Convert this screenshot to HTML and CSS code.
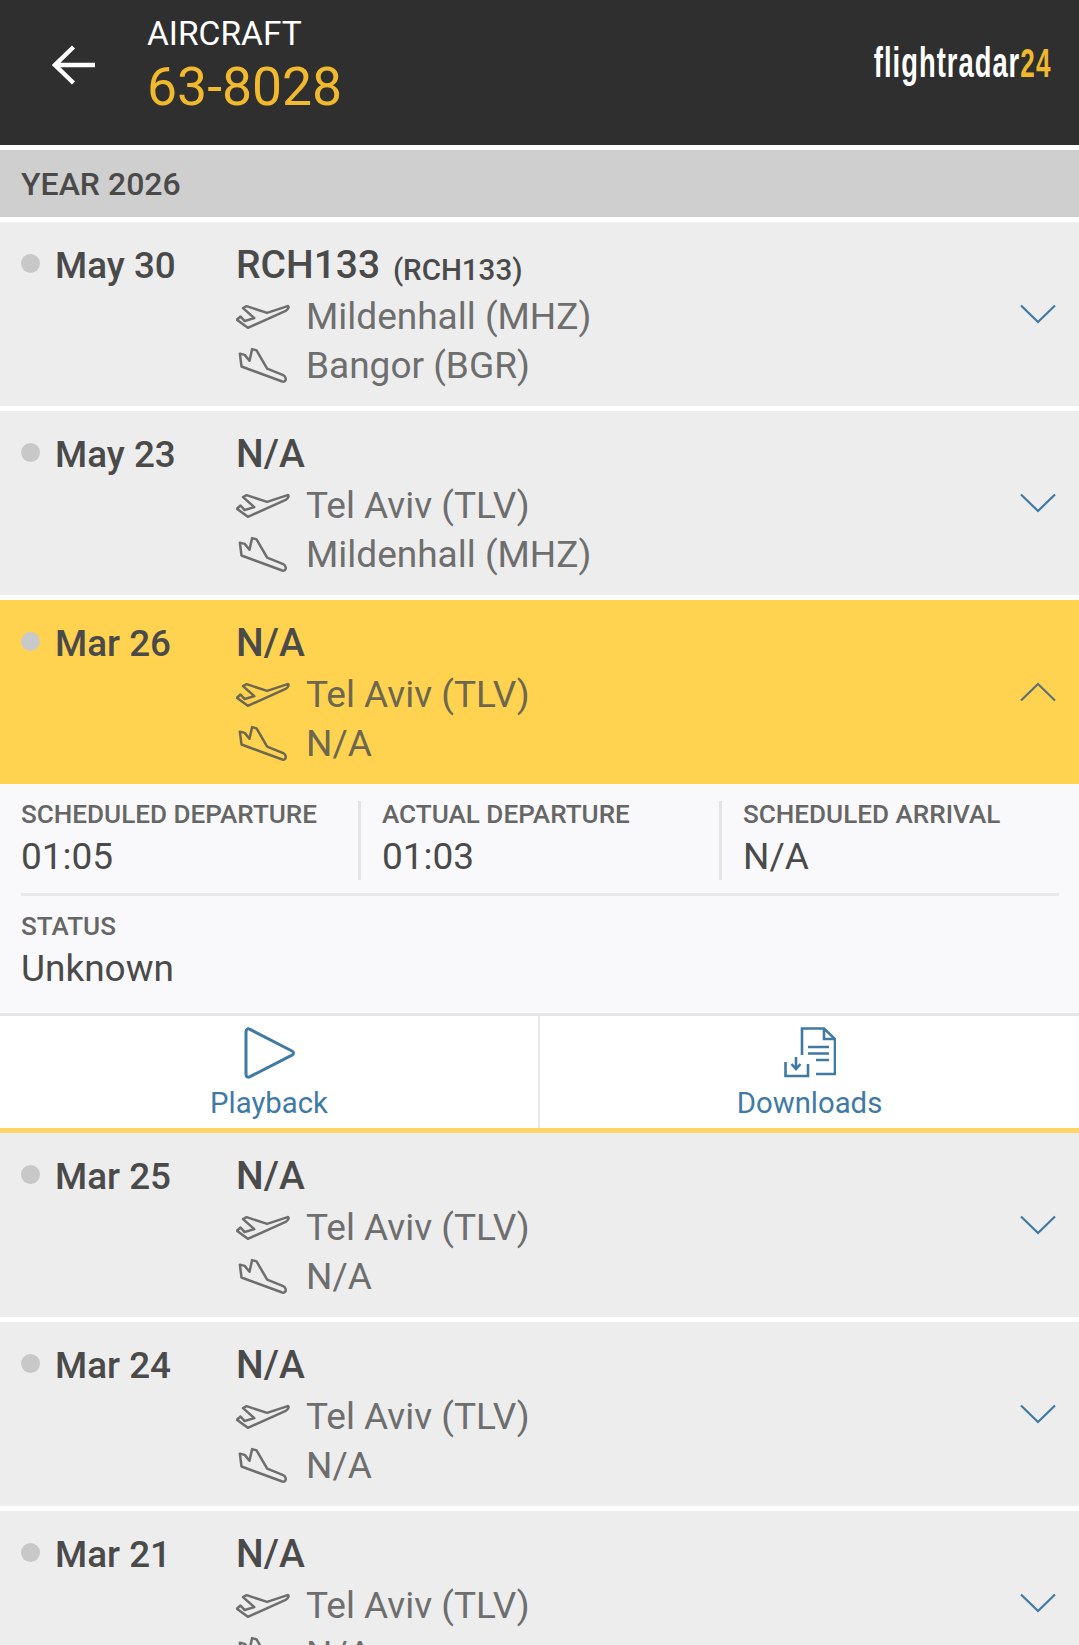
FILE: index.html
```html
<!DOCTYPE html>
<html lang="en">
<head>
  <meta charset="UTF-8" />
  <title>Aircraft 63-8028 - Flightradar24</title>
  <link rel="stylesheet" href="styles.css">
</head>
<body>
  <!-- Shared icons -->
  <svg class="icon-defs" width="0" height="0">
    <symbol id="icon-takeoff" viewBox="0 0 56 32">
      <path d="M53.5 5.2 32.3 12.3 11 5.3 7.3 7.3 19 17.7 9 20.7 4.7 16 .9 19.3 12.3 27.7 51.5 10.2C54.5 8.6 55.4 5.2 53.5 5.2Z" fill="none" stroke="currentColor" stroke-width="2.6" stroke-linejoin="round"/>
    </symbol>
    <symbol id="icon-landing" viewBox="0 0 56 40">
      <path d="M4 7.7 9 9 14 15 16.7 3 21.3 4.3 32.3 23.3 49 30C51.5 31 52.5 35 50.5 36.3 49.5 37 48 36.8 47.3 36.3L5.7 21Z" fill="none" stroke="currentColor" stroke-width="2.6" stroke-linejoin="round"/>
    </symbol>
    <symbol id="icon-down" viewBox="0 0 36 20">
      <path d="M1 1.5 18 18 35 1.5" fill="none" stroke="currentColor" stroke-width="2.2"/>
    </symbol>
  </svg>

  <header class="topbar">
    <svg class="back-arrow" viewBox="0 0 44 40" width="44" height="40">
      <path d="M43 20H3M21.5 2 3 20 21.5 38" fill="none" stroke="#fff" stroke-width="4.4"/>
    </svg>
    <div class="topbar-title">
      <div class="topbar-label">AIRCRAFT</div>
      <div class="topbar-reg">63-8028</div>
    </div>
    <div class="logo">flightradar<span class="logo-num">24</span></div>
  </header>

  <div class="year-bar">YEAR 2026</div>

  <!-- Flight rows -->
  <div class="flight">
    <span class="dot"></span>
    <div class="flight-date">May 30</div>
    <div class="flight-info">
      <div class="flight-name">RCH133 <small>(RCH133)</small></div>
      <div class="airport"><svg class="plane"><use href="#icon-takeoff"/></svg>Mildenhall (MHZ)</div>
      <div class="airport"><svg class="plane plane-land"><use href="#icon-landing"/></svg>Bangor (BGR)</div>
    </div>
    <svg class="chevron"><use href="#icon-down"/></svg>
  </div>

  <div class="flight">
    <span class="dot"></span>
    <div class="flight-date">May 23</div>
    <div class="flight-info">
      <div class="flight-name">N/A</div>
      <div class="airport"><svg class="plane"><use href="#icon-takeoff"/></svg>Tel Aviv (TLV)</div>
      <div class="airport"><svg class="plane plane-land"><use href="#icon-landing"/></svg>Mildenhall (MHZ)</div>
    </div>
    <svg class="chevron"><use href="#icon-down"/></svg>
  </div>

  <!-- Expanded flight -->
  <div class="flight-open">
    <div class="flight flight-active">
      <span class="dot"></span>
      <div class="flight-date">Mar 26</div>
      <div class="flight-info">
        <div class="flight-name">N/A</div>
        <div class="airport"><svg class="plane"><use href="#icon-takeoff"/></svg>Tel Aviv (TLV)</div>
        <div class="airport"><svg class="plane plane-land"><use href="#icon-landing"/></svg>N/A</div>
      </div>
      <svg class="chevron chevron-up"><use href="#icon-down"/></svg>
    </div>

    <div class="details">
      <div class="details-times">
        <div class="detail-cell">
          <div class="detail-label">SCHEDULED DEPARTURE</div>
          <div class="detail-value">01:05</div>
        </div>
        <div class="detail-cell">
          <div class="detail-label">ACTUAL DEPARTURE</div>
          <div class="detail-value">01:03</div>
        </div>
        <div class="detail-cell">
          <div class="detail-label">SCHEDULED ARRIVAL</div>
          <div class="detail-value">N/A</div>
        </div>
      </div>
      <div class="details-status">
        <div class="detail-label">STATUS</div>
        <div class="detail-value">Unknown</div>
      </div>
    </div>

    <div class="actions">
      <div class="action">
        <svg class="action-icon" viewBox="0 0 52 52" width="52" height="52">
          <path d="M3 4.5C3 2.4 4.8 1.2 6.6 2.2L49 24C51 25 51 27.2 49 28.2L6.6 49.8C4.8 50.8 3 49.6 3 47.5Z" fill="none" stroke="currentColor" stroke-width="3" stroke-linejoin="round"/>
        </svg>
        <span>Playback</span>
      </div>
      <div class="action">
        <svg class="action-icon" viewBox="0 0 52 52" width="52" height="52">
          <path d="M18 28V1.5H40L51 12V47H32M40 1.5V12H51M24 20H45M24 26.5H45M32 33H45M1.5 35V49H24V37M12 30V42M7.5 37 12 42 16.5 37" fill="none" stroke="currentColor" stroke-width="2.6"/>
        </svg>
        <span>Downloads</span>
      </div>
    </div>
  </div>

  <div class="flight">
    <span class="dot"></span>
    <div class="flight-date">Mar 25</div>
    <div class="flight-info">
      <div class="flight-name">N/A</div>
      <div class="airport"><svg class="plane"><use href="#icon-takeoff"/></svg>Tel Aviv (TLV)</div>
      <div class="airport"><svg class="plane plane-land"><use href="#icon-landing"/></svg>N/A</div>
    </div>
    <svg class="chevron"><use href="#icon-down"/></svg>
  </div>

  <div class="flight">
    <span class="dot"></span>
    <div class="flight-date">Mar 24</div>
    <div class="flight-info">
      <div class="flight-name">N/A</div>
      <div class="airport"><svg class="plane"><use href="#icon-takeoff"/></svg>Tel Aviv (TLV)</div>
      <div class="airport"><svg class="plane plane-land"><use href="#icon-landing"/></svg>N/A</div>
    </div>
    <svg class="chevron"><use href="#icon-down"/></svg>
  </div>

  <div class="flight">
    <span class="dot"></span>
    <div class="flight-date">Mar 21</div>
    <div class="flight-info">
      <div class="flight-name">N/A</div>
      <div class="airport"><svg class="plane"><use href="#icon-takeoff"/></svg>Tel Aviv (TLV)</div>
      <div class="airport"><svg class="plane plane-land"><use href="#icon-landing"/></svg>N/A</div>
    </div>
    <svg class="chevron"><use href="#icon-down"/></svg>
  </div>
</body>
</html>
```

FILE: styles.css
```css
/* Base */
html {
  height: 100%;
  overflow: hidden;
}
body {
  margin: 0;
  background: #fff;
  color: #4a4a4a;
  font-family: Roboto, "Liberation Sans", sans-serif;
}
.icon-defs {
  position: absolute;
}

/* Top bar */
.topbar {
  display: flex;
  height: 145px;
  margin-bottom: 5px;
  padding-left: 52px;
  background: #2f2f2f;
  box-sizing: border-box;
}
.back-arrow {
  margin-top: 45px;
  flex-shrink: 0;
}
.topbar-title {
  margin-left: 51px;
  padding-top: 14px;
}
.topbar-label {
  color: #fff;
  font-size: 33.5px;
  line-height: 40px;
}
.topbar-reg {
  color: #f0b92e;
  font-size: 53.5px;
  line-height: 66px;
}
.logo {
  margin-left: auto;
  margin-right: 27px;
  margin-top: 35px;
  color: #fff;
  font-family: "Liberation Sans", sans-serif;
  font-size: 42px;
  font-weight: bold;
  letter-spacing: 1.6px;
  line-height: 56px;
  height: 56px;
  transform: scaleX(0.65);
  transform-origin: right center;
  white-space: nowrap;
}
.logo-num {
  color: #eeb92f;
  font-size: 40px;
  letter-spacing: 2px;
}

/* Year divider */
.year-bar {
  height: 67px;
  margin-bottom: 5px;
  padding-left: 21px;
  background: #cfcfcf;
  font-size: 32px;
  font-weight: 500;
  line-height: 69px;
}

/* Flight row */
.flight {
  display: flex;
  align-items: center;
  height: 184px;
  margin-bottom: 5px;
  padding: 0 23px 0 21px;
  background: #ededed;
  box-sizing: border-box;
}
.dot {
  align-self: flex-start;
  width: 19px;
  height: 19px;
  margin-top: 32px;
  border-radius: 50%;
  background: #c8c8c8;
  flex-shrink: 0;
}
.flight-date {
  align-self: flex-start;
  width: 181px;
  margin-left: 15px;
  padding-top: 19px;
  font-size: 36.8px;
  font-weight: 500;
  line-height: 49px;
  flex-shrink: 0;
}
.flight-info {
  align-self: flex-start;
  padding-top: 19px;
}
.flight-name {
  height: 51px;
  font-size: 39px;
  font-weight: 500;
  line-height: 49px;
}
.flight-name small {
  margin-left: 3px;
  font-size: 29.5px;
  line-height: 0;
  position: relative;
  top: 2px;
}
.airport {
  display: flex;
  align-items: center;
  height: 49px;
  color: #6e6e6e;
  font-size: 37px;
}
.plane {
  width: 54px;
  height: 31px;
  margin-right: 16px;
  flex-shrink: 0;
}
.plane-land {
  height: 39px;
}
.chevron {
  width: 36px;
  height: 20px;
  margin-left: auto;
  margin-bottom: 1px;
  color: #3f7aa5;
  flex-shrink: 0;
}
.chevron-up {
  margin-bottom: 0;
  transform: rotate(180deg);
  color: #5f7076;
}

/* Expanded flight */
.flight-open {
  margin-bottom: 0;
  border-bottom: 5px solid #fdd663;
}
.flight-active {
  margin-bottom: 0;
  background: #ffd34f;
}
.flight-active .dot {
  background: #c9c9c9;
}
.flight-active .airport {
  color: #6d6750;
}
.details {
  height: 232px;
  padding: 17px 20px 0 21px;
  background: #f9f9fb;
  border-bottom: 3px solid #e5e5e5;
  box-sizing: border-box;
}
.details-times {
  display: grid;
  grid-template-columns: 337px 361px 1fr;
  height: 75px;
  padding-bottom: 17px;
  border-bottom: 3px solid #e8e8e8;
}
.detail-cell + .detail-cell {
  padding-left: 21px;
  border-left: 3px solid #e4e4e4;
}
.detail-label {
  margin-top: -2px;
  color: #666;
  font-size: 26.1px;
  font-weight: 500;
  line-height: 30px;
}
.detail-value {
  padding-top: 4px;
  font-size: 37px;
  line-height: 47px;
}
.details-status {
  padding-top: 17px;
}

/* Playback / Downloads */
.actions {
  display: grid;
  grid-template-columns: 538px 1fr;
  height: 112px;
  background: #fff;
}
.action {
  display: flex;
  flex-direction: column;
  align-items: center;
  padding-top: 11px;
  color: #3f7aa5;
  font-size: 29.3px;
  line-height: 36px;
}
.action + .action {
  border-left: 2px solid #e8e8e8;
}
.action-icon {
  margin-bottom: 6px;
}
```
